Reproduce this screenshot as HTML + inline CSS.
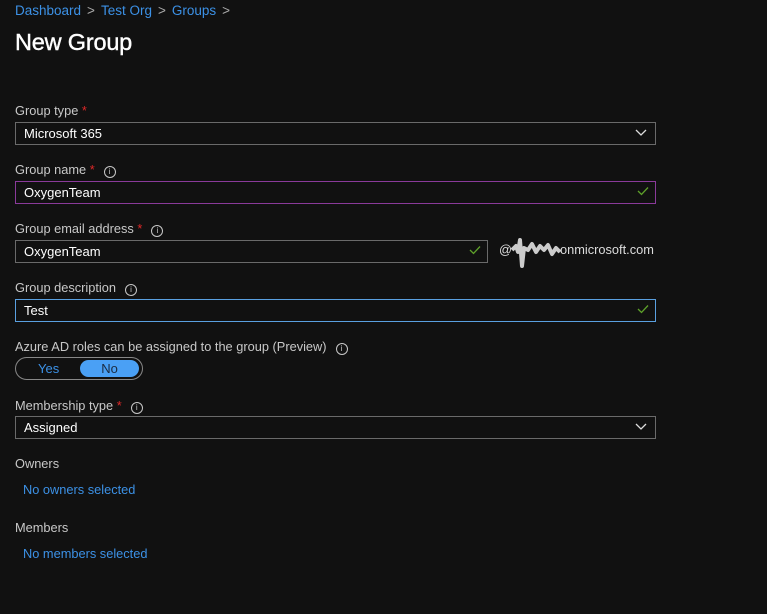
<!DOCTYPE html>
<html><head><style>
body{margin:0;width:767px;height:614px;background:#111111;font-family:"Liberation Sans",sans-serif;color:#fff;position:relative;overflow:hidden}
.a{position:absolute}
.bc{top:3px;left:15px;font-size:13.5px;color:#3c91e6}
.bc span{color:#aaa;margin:0 6px}
h1{position:absolute;top:29px;left:15px;margin:0;font-size:23.5px;font-weight:normal;letter-spacing:-0.2px;color:#fff;-webkit-text-stroke:0.4px #fff}
.lbl{position:absolute;left:15px;font-size:12.8px;color:#c8c8c8}
.lbl b{color:#e02828;font-weight:normal}
.info{display:inline-block;width:10px;height:10px;border:1px solid #c8c8c8;border-radius:50%;font-size:8px;line-height:10px;text-align:center;margin-left:9px;vertical-align:0px}
.box{position:absolute;left:15px;width:639px;height:21px;border:1px solid #6a6a6a;font-size:13px;line-height:21px;box-sizing:content-box}
.box .t{position:absolute;left:8px;top:0}
.chk{position:absolute;right:6px;top:4px}
.dd{position:absolute;right:8px;top:6px}
.link{position:absolute;left:23px;font-size:12.8px;color:#3c91e6}
</style></head><body>
<div class="a bc">Dashboard<span>&gt;</span>Test Org<span>&gt;</span>Groups<span>&gt;</span></div>
<h1>New Group</h1>

<div class="lbl" style="top:103px">Group type <b>*</b></div>
<div class="box" style="top:122px"><span class="t">Microsoft 365</span>
<svg class="dd" width="12" height="8" viewBox="0 0 12 8"><path d="M1 1L6 6L11 1" stroke="#ddd" stroke-width="1.3" fill="none"/></svg></div>

<div class="lbl" style="top:162px">Group name <b>*</b><span class="info">i</span></div>
<div class="box" style="top:181px;border-color:#8a3a9a"><span class="t">OxygenTeam</span>
<svg class="chk" width="12" height="10" viewBox="0 0 12 10"><path d="M1 5L4.5 8.5L11 1.5" stroke="#5ea12a" stroke-width="1.3" fill="none"/></svg></div>

<div class="lbl" style="top:221px">Group email address <b>*</b><span class="info">i</span></div>
<div class="box" style="top:240px;width:471px"><span class="t">OxygenTeam</span>
<svg class="chk" width="12" height="10" viewBox="0 0 12 10"><path d="M1 5L4.5 8.5L11 1.5" stroke="#5ea12a" stroke-width="1.3" fill="none"/></svg></div>
<div class="a" style="left:499px;top:242px;font-size:12.8px;color:#ddd">@</div>
<svg class="a" style="left:510px;top:236px" width="52" height="34" viewBox="0 0 52 34"><path d="M2 14L6 10L8 16L10 4L12 30L14 12L18 14L22 8L26 16L30 10L34 14L38 9L42 18L46 12L50 16" stroke="#ccc" stroke-width="4" fill="none" stroke-linejoin="round"/></svg>
<div class="a" style="left:560px;top:242px;font-size:12.8px;color:#ddd">onmicrosoft.com</div>

<div class="lbl" style="top:280px">Group description<span class="info">i</span></div>
<div class="box" style="top:299px;border-color:#5aa0e0"><span class="t">Test</span>
<svg class="chk" width="12" height="10" viewBox="0 0 12 10"><path d="M1 5L4.5 8.5L11 1.5" stroke="#5ea12a" stroke-width="1.3" fill="none"/></svg></div>

<div class="lbl" style="top:339px">Azure AD roles can be assigned to the group (Preview)<span class="info">i</span></div>
<div class="a" style="left:15px;top:357px;width:126px;height:21px;border:1px solid #888;border-radius:12px"></div>
<div class="a" style="left:38px;top:361px;font-size:13px;color:#3c91e6">Yes</div>
<div class="a" style="left:80px;top:360px;width:59px;height:17px;background:#4aa0f5;border-radius:9px;font-size:13px;line-height:17px;text-align:center;color:#1a2a40">No</div>

<div class="lbl" style="top:398px">Membership type <b>*</b><span class="info">i</span></div>
<div class="box" style="top:416px"><span class="t">Assigned</span>
<svg class="dd" width="12" height="8" viewBox="0 0 12 8"><path d="M1 1L6 6L11 1" stroke="#ddd" stroke-width="1.3" fill="none"/></svg></div>

<div class="lbl" style="top:456px">Owners</div>
<div class="link" style="top:482px">No owners selected</div>
<div class="lbl" style="top:520px">Members</div>
<div class="link" style="top:546px">No members selected</div>
</body></html>
